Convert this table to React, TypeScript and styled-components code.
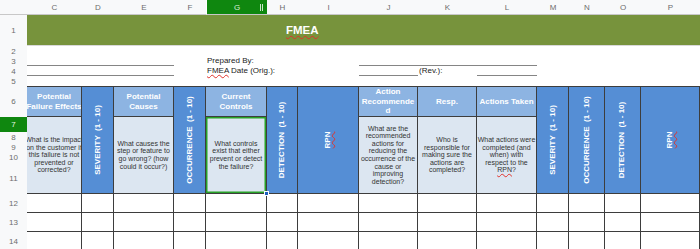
import type { ReactNode } from 'react';
import styled, { createGlobalStyle, css } from 'styled-components';

const COLS = ['C', 'D', 'E', 'F', 'G', 'H', 'I', 'J', 'K', 'L', 'M', 'N', 'O', 'P'];
const COL_WIDTHS = [55, 32, 60, 32, 61, 31, 61, 59, 59, 60, 32, 36, 36, 59];
const ROW_HEIGHTS = [31, 10, 10, 10, 10, 31, 15, 10, 10, 10, 32, 19, 19, 19];

const SELECTED_COL = 'G';
const SELECTED_ROW = 7;

const col = (letter: string): number => COLS.indexOf(letter) + 2;
const row = (n: number): number => n + 1;

type ColumnSpec = {
  col: string;
  head?: string[];
  note?: ReactNode[];
  score?: ReactNode;
  selected?: boolean;
};

const Typo = ({ children }: { children: ReactNode }) => <Squiggle>{children}</Squiggle>;

const TABLE: ColumnSpec[] = [
  {
    col: 'C',
    head: ['Potential', 'Failure Effects'],
    note: ['What is the impact', 'on the customer if', 'this failure is not', 'prevented or', 'corrected?'],
  },
  { col: 'D', score: 'SEVERITY  (1 - 10)' },
  {
    col: 'E',
    head: ['Potential', 'Causes'],
    note: ['What causes the', 'step or feature to', 'go wrong? (how', 'could it occur?)'],
  },
  { col: 'F', score: 'OCCURRENCE  (1 - 10)' },
  {
    col: 'G',
    head: ['Current', 'Controls'],
    note: ['What controls', 'exist that either', 'prevent or detect', 'the failure?'],
    selected: true,
  },
  { col: 'H', score: 'DETECTION  (1 - 10)' },
  { col: 'I', score: <Typo>RPN</Typo> },
  {
    col: 'J',
    head: ['Action', 'Recommende', 'd'],
    note: [
      'What are the',
      'recommended',
      'actions for',
      'reducing the',
      'occurrence of the',
      'cause or',
      'improving',
      'detection?',
    ],
  },
  {
    col: 'K',
    head: ['Resp.'],
    note: ['Who is', 'responsible for', 'making sure the', 'actions are', 'completed?'],
  },
  {
    col: 'L',
    head: ['Actions Taken'],
    note: [
      'What actions were',
      'completed (and',
      'when) with',
      'respect to the',
      <>
        <Typo>RPN</Typo>?
      </>,
    ],
  },
  { col: 'M', score: 'SEVERITY  (1 - 10)' },
  { col: 'N', score: 'OCCURRENCE  (1 - 10)' },
  { col: 'O', score: 'DETECTION  (1 - 10)' },
  { col: 'P', score: <Typo>RPN</Typo> },
];

const BLANK_ROWS = [12, 13, 14];

export default function App() {
  return (
    <>
      <GlobalStyle />
      <Sheet>
        <Corner />
        {COLS.map((letter) => (
          <ColHead key={letter} $selected={letter === SELECTED_COL}>
            {letter}
            {letter === SELECTED_COL ? <ResizeGrip /> : null}
          </ColHead>
        ))}

        {ROW_HEIGHTS.map((_, i) => (
          <RowHead key={i} $r={row(i + 1)} $selected={i + 1 === SELECTED_ROW}>
            {i + 1}
          </RowHead>
        ))}

        <TitleBar $c={col('C')} $r={row(1)} $cs={COLS.length}>
          <Squiggle>FMEA</Squiggle>
        </TitleBar>

        <Rule $c={col('C')} $r={row(3)} $cs={3} />
        <Rule $c={col('C')} $r={row(4)} $cs={3} />
        <Label $c={col('G')} $r={row(3)}>Prepared By:</Label>
        <Label $c={col('G')} $r={row(4)}>
          <Squiggle>FMEA</Squiggle>
          {' Date (Orig.):'}
        </Label>
        <Rule $c={col('J')} $r={row(3)} $cs={3} />
        <Rule $c={col('J')} $r={row(4)} />
        <Label $c={col('K')} $r={row(4)}>(Rev.):</Label>
        <Rule $c={col('L')} $r={row(4)} />

        {TABLE.map((spec) =>
          spec.score !== undefined ? (
            <ScoreCell key={spec.col} $c={col(spec.col)} $r={row(6)} $rs={6}>
              <Vertical>{spec.score}</Vertical>
            </ScoreCell>
          ) : (
            [
              <HeadCell key={`${spec.col}-h`} $c={col(spec.col)} $r={row(6)}>
                {spec.head?.map((line) => <Line key={line}>{line}</Line>)}
              </HeadCell>,
              <NoteCell
                key={`${spec.col}-n`}
                $c={col(spec.col)}
                $r={row(7)}
                $rs={5}
                $selected={spec.selected}
              >
                {spec.note?.map((line, i) => <Line key={i}>{line}</Line>)}
                {spec.selected ? <FillHandle /> : null}
              </NoteCell>,
            ]
          ),
        )}

        {BLANK_ROWS.map((r) =>
          COLS.map((letter) => <BlankCell key={`${letter}${r}`} $c={col(letter)} $r={row(r)} />),
        )}
      </Sheet>
    </>
  );
}

const GlobalStyle = createGlobalStyle`
  html, body {
    margin: 0;
    padding: 0;
    background: #ffffff;
    overflow: hidden;
  }
  * {
    box-sizing: border-box;
  }
`;

type Place = { $c: number; $r: number; $cs?: number; $rs?: number };

const place = css<Place>`
  grid-column: ${({ $c, $cs }) => `${$c} / span ${$cs ?? 1}`};
  grid-row: ${({ $r, $rs }) => `${$r} / span ${$rs ?? 1}`};
`;

const Sheet = styled.div`
  display: grid;
  grid-template-columns: 27px ${COL_WIDTHS.map((w) => `${w}px`).join(' ')};
  grid-template-rows: 15px ${ROW_HEIGHTS.map((h) => `${h}px`).join(' ')};
  width: 700px;
  font-family: 'Liberation Sans', Arial, sans-serif;
  color: #222222;
`;

const Corner = styled.div`
  grid-column: 1;
  grid-row: 1;
  background: #f8f9fa;
  border-bottom: 1px solid #c8c8c8;
`;

const ColHead = styled.div<{ $selected?: boolean }>`
  position: relative;
  display: flex;
  align-items: center;
  justify-content: center;
  font-size: 8px;
  color: ${({ $selected }) => ($selected ? '#d7efd7' : '#6d6d6d')};
  background: ${({ $selected }) => ($selected ? '#0f870f' : '#f8f9fa')};
  border-bottom: 1px solid #c8c8c8;
  border-left: ${({ $selected }) => ($selected ? '1px solid #ffffff' : '0')};
`;

const ResizeGrip = styled.span`
  position: absolute;
  right: 4px;
  top: 4px;
  width: 3px;
  height: 7px;
  border-left: 1px solid #c9e6c9;
  border-right: 1px solid #c9e6c9;
`;

const RowHead = styled.div<{ $r: number; $selected?: boolean }>`
  grid-column: 1;
  grid-row: ${({ $r }) => $r};
  display: flex;
  align-items: center;
  justify-content: center;
  font-size: 8px;
  color: ${({ $selected }) => ($selected ? '#e4f4e4' : '#6d6d6d')};
  background: ${({ $selected }) => ($selected ? '#0f870f' : '#f8f9fa')};
`;

const Squiggle = styled.span`
  text-decoration-line: underline;
  text-decoration-style: wavy;
  text-decoration-color: #e0322b;
  text-decoration-thickness: 1px;
  text-underline-offset: 1px;
`;

const TitleBar = styled.div<Place>`
  ${place};
  display: flex;
  align-items: center;
  padding-left: 259px;
  background: #77933c;
  border-bottom: 1px solid #d9d9d9;
  color: #ffffff;
  font-size: 11.5px;
  font-weight: 700;
`;

const Rule = styled.div<Place>`
  ${place};
  border-bottom: 1px solid #858585;
`;

const Label = styled.div<Place>`
  ${place};
  padding-left: 1px;
  font-size: 8px;
  line-height: 10px;
  white-space: pre;
  overflow: visible;
  z-index: 1;
`;

const tableCell = css`
  display: flex;
  flex-direction: column;
  align-items: center;
  justify-content: center;
  border-right: 1px solid #3d3d3d;
  border-bottom: 1px solid #3d3d3d;
  overflow: hidden;
  text-align: center;
  white-space: pre;
`;

const HeadCell = styled.div<Place>`
  ${place};
  ${tableCell};
  border-top: 1px solid #3d3d3d;
  background: #8db4e2;
  color: #ffffff;
  font-size: 8px;
  font-weight: 700;
  line-height: 9.5px;
`;

const ScoreCell = styled.div<Place>`
  ${place};
  ${tableCell};
  overflow: visible;
  border-top: 1px solid #3d3d3d;
  background: #558ed5;
  color: #ffffff;
  font-size: 8px;
  font-weight: 700;
`;

const Vertical = styled.span`
  display: inline-block;
  transform: rotate(-90deg);
  white-space: pre;
  line-height: 10px;
`;

const NoteCell = styled.div<Place & { $selected?: boolean }>`
  ${place};
  ${tableCell};
  position: relative;
  overflow: ${({ $selected }) => ($selected ? 'visible' : 'hidden')};
  background: #dce6f1;
  color: #333333;
  font-size: 7px;
  line-height: 7.6px;
  box-shadow: ${({ $selected }) => ($selected ? 'inset 0 0 0 1.5px #27a127' : 'none')};
`;

const Line = styled.span`
  white-space: pre;
`;

const FillHandle = styled.span`
  position: absolute;
  right: -3px;
  bottom: -3px;
  width: 5px;
  height: 5px;
  background: #1f5fbf;
  border: 1px solid #ffffff;
  z-index: 2;
`;

const BlankCell = styled.div<Place>`
  ${place};
  border-right: 1px solid #3d3d3d;
  border-bottom: 1px solid #3d3d3d;
  background: #ffffff;
`;
